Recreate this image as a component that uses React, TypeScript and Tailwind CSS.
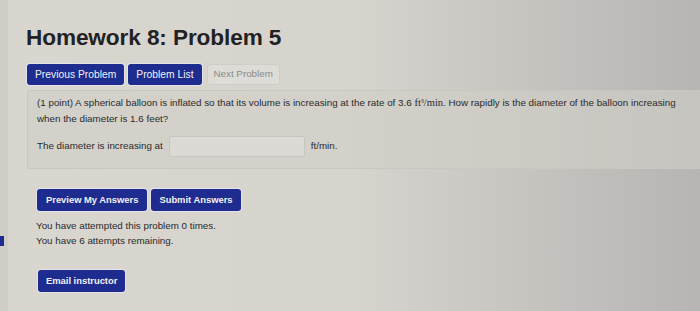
import React from 'react';

const Btn: React.FC<{ label: string; disabled?: boolean; className?: string }> = ({ label, disabled, className = '' }) => (
  <button
    className={
      disabled
        ? `h-[21px] px-[8px] rounded-[3px] border border-[#cfcdc7] bg-[#dedcd6] text-[#8a8a8c] text-[10.3px] ${className}`
        : `h-[21px] px-[8px] rounded-[3px] bg-[#1d2c8e] text-[#f2f2f6] text-[10.3px] shadow-[0_0_0_1px_#e4e4e8] ${className}`
    }
  >
    {label}
  </button>
);

const App: React.FC = () => {
  return (
    <div
      className="w-[700px] h-[311px] overflow-hidden bg-linear-to-r from-[#d8d6cf] via-[#d6d4cd] to-[#b7b5b3] text-[#2a2a2c] font-['Liberation_Sans',Arial,sans-serif] flex"
    >
      <div className="w-[8px] shrink-0 bg-[#cfcdc6] flex flex-col">
        <div className="mt-[236px] h-[10px] w-[4px] bg-[#1d2c8e]" />
      </div>
      <div className="flex-1 pl-[18px] flex flex-col">
        <h1 className="mt-[25px] text-[22.6px] leading-[26px] font-bold text-[#222224] tracking-[-0.1px]">
          Homework 8: Problem 5
        </h1>
        <div className="mt-[13px] flex gap-[4px] ml-[1px]">
          <Btn label="Previous Problem" />
          <Btn label="Problem List" />
          <Btn label="Next Problem" disabled className="ml-[1px] !px-[6px] !text-[9.8px]" />
        </div>
        <div className="mt-[5px] ml-[1px] -mr-[20px] h-[79px] border border-[#c9c7c1] bg-[#d0cec7]/60 pl-[9px] pt-[4px] text-[9.8px]">
          <p className="leading-[16px]">
            (1 point) A spherical balloon is inflated so that its volume is increasing at the rate of 3.6{' '}
            <span className="font-['Liberation_Serif',serif] text-[10.5px]">
              ft<sup className="text-[6px]">3</sup>/min
            </span>
            . How rapidly is the diameter of the balloon increasing
            <br />
            when the diameter is 1.6 feet?
          </p>
          <div className="mt-[9px] flex items-center">
            <span>The diameter is increasing at</span>
            <input
              className="ml-[6px] w-[136px] h-[21px] rounded-[2px] border border-[#c8c6c0] bg-[#dcdad4] outline-none"
              readOnly
            />
            <span className="ml-[6px]">ft/min.</span>
          </div>
        </div>
        <div className="mt-[20px] ml-[11px] flex gap-[4px]">
          <Btn label="Preview My Answers" className="font-bold !text-[9.4px] h-[22px] px-[9px]" />
          <Btn label="Submit Answers" className="font-bold !text-[9.4px] h-[22px] !px-[8px]" />
        </div>
        <div className="mt-[7px] ml-[10px] text-[9.8px] leading-[15px]">
          <p>You have attempted this problem 0 times.</p>
          <p>You have 6 attempts remaining.</p>
        </div>
        <div className="mt-[19px] ml-[12px]">
          <Btn label="Email instructor" className="font-bold !text-[9.4px] h-[22px] !px-[8px]" />
        </div>
      </div>
    </div>
  );
};

export default App;
